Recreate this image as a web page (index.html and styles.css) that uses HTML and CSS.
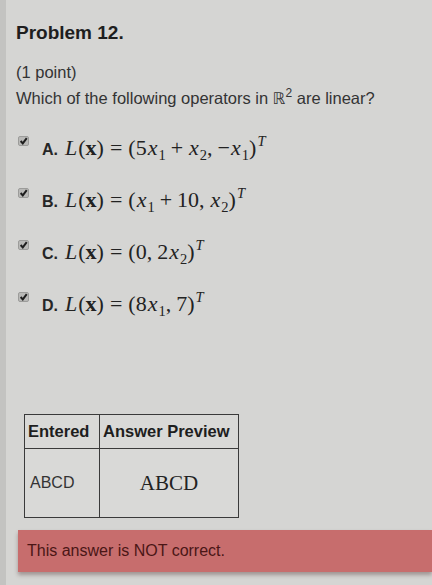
FILE: index.html
```html
<!DOCTYPE html>
<html>
<head>
<meta charset="utf-8">
<link rel="stylesheet" href="styles.css">
</head>
<body>
<div class="page">
  <h1 class="title">Problem 12.</h1>
  <p class="points">(1 point)</p>
  <p class="question">Which of the following operators in <span class="bb">ℝ</span><sup class="sq">2</sup> are linear?</p>
  <ul class="options">
    <li class="opt"><span class="cb"><svg viewBox="0 0 10 10" width="10" height="10"><path d="M1.8 5 L4.2 7.6 L8.6 1.8" fill="none" stroke="#1e1e1e" stroke-width="2.2"/></svg></span><span class="lbl">A.</span><span class="math"><i>L</i>(<b>x</b>)<span class="rel">=</span>(5<i>x</i><sub>1</sub><span class="bin">+</span><i>x</i><sub>2</sub><span class="pun">,</span>−<i>x</i><sub>1</sub>)<sup><i>T</i></sup></span></li>
    <li class="opt"><span class="cb"><svg viewBox="0 0 10 10" width="10" height="10"><path d="M1.8 5 L4.2 7.6 L8.6 1.8" fill="none" stroke="#1e1e1e" stroke-width="2.2"/></svg></span><span class="lbl">B.</span><span class="math"><i>L</i>(<b>x</b>)<span class="rel">=</span>(<i>x</i><sub>1</sub><span class="bin">+</span>10<span class="pun">,</span><i>x</i><sub>2</sub>)<sup><i>T</i></sup></span></li>
    <li class="opt"><span class="cb"><svg viewBox="0 0 10 10" width="10" height="10"><path d="M1.8 5 L4.2 7.6 L8.6 1.8" fill="none" stroke="#1e1e1e" stroke-width="2.2"/></svg></span><span class="lbl">C.</span><span class="math"><i>L</i>(<b>x</b>)<span class="rel">=</span>(0<span class="pun">,</span>2<i>x</i><sub>2</sub>)<sup><i>T</i></sup></span></li>
    <li class="opt"><span class="cb"><svg viewBox="0 0 10 10" width="10" height="10"><path d="M1.8 5 L4.2 7.6 L8.6 1.8" fill="none" stroke="#1e1e1e" stroke-width="2.2"/></svg></span><span class="lbl">D.</span><span class="math"><i>L</i>(<b>x</b>)<span class="rel">=</span>(8<i>x</i><sub>1</sub><span class="pun">,</span>7)<sup><i>T</i></sup></span></li>
  </ul>
  <table class="answers">
    <tr><th class="c1">Entered</th><th class="c2">Answer Preview</th></tr>
    <tr><td class="entered">ABCD</td><td class="preview">ABCD</td></tr>
  </table>
  <div class="wrong">This answer is NOT correct.</div>
</div>
</body>
</html>
```
FILE: styles.css
```css
html, body {
  margin: 0;
  padding: 0;
  background: #d5d5d3;
  height: 100%;
}
body {
  border-left: 6px solid #c3c3c1;
  font-family: "Liberation Sans", Arial, sans-serif;
  color: #2a2a2a;
  overflow: hidden;
}
.page {
  padding: 22px 0 0 10px;
}
.title {
  margin: 0;
  font-size: 19px;
  line-height: 22px;
  font-weight: bold;
  color: #1e1e1e;
}
.points {
  margin: 17px 0 0 0;
  font-size: 16.5px;
  line-height: 22px;
  color: #333;
}
.question {
  margin: 4px 0 0 0;
  font-size: 16.5px;
  line-height: 22px;
  color: #333;
}
.bb {
  font-family: "DejaVu Sans", sans-serif;
  font-size: 16px;
}
.sq {
  font-size: 12px;
  line-height: 0;
  vertical-align: 7px;
}
.options {
  list-style: none;
  margin: 23px 0 0 2px;
  padding: 0;
  display: flex;
  flex-direction: column;
  gap: 22px;
}
.opt {
  display: flex;
  align-items: baseline;
  height: 30px;
}
.cb {
  align-self: flex-start;
  width: 9px;
  height: 8px;
  background: #b9b9b7;
  border: 1px solid #9c9c9a;
  border-radius: 2px;
  display: flex;
  align-items: center;
  justify-content: center;
  margin-top: 3px;
  overflow: hidden;
}
.lbl {
  margin-left: 13px;
  font-weight: bold;
  font-size: 16px;
  line-height: 30px;
  color: #262626;
}
.math {
  margin-left: 6px;
  font-family: "Liberation Serif", "Times New Roman", serif;
  font-size: 22px;
  line-height: 30px;
  color: #222;
  white-space: nowrap;
}
.math i {
  padding: 0 1px;
}
.math .rel {
  margin: 0 6px;
}
.math .bin {
  margin: 0 5px;
}
.math .pun {
  margin-right: 5px;
}
.math sub {
  font-size: 14.5px;
  line-height: 0;
  vertical-align: -5px;
}
.math sup {
  font-size: 14.5px;
  line-height: 0;
  vertical-align: 9px;
}
.answers {
  margin: 95px 0 0 8px;
  border-collapse: collapse;
  background: #d9d9d7;
}
.answers th, .answers td {
  border: 1px solid #3a3a3a;
}
.answers th {
  height: 33px;
  font-size: 16.5px;
  font-weight: bold;
  color: #1e1e1e;
  padding: 0 3px;
  text-align: left;
  white-space: nowrap;
}
.c1 { width: 68px; }
.c2 { width: 132px; }
.answers td {
  height: 68px;
  padding: 0;
}
.entered {
  font-size: 16px;
  color: #333;
  padding-left: 5px !important;
}
.preview {
  font-family: "Liberation Serif", "Times New Roman", serif;
  font-size: 21px;
  text-align: center;
  color: #222;
}
.wrong {
  margin: 12px 0 0 2px;
  height: 42px;
  background: #c76d6d;
  box-shadow: 0 3px 4px rgba(60, 30, 30, 0.35);
  color: #4a1616;
  font-size: 16px;
  line-height: 42px;
  padding-left: 9px;
}
```
